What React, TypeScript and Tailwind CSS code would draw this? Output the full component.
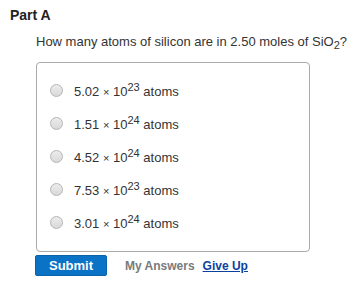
import React from "react";

const options: [string, string][] = [
  ["5.02", "23"],
  ["1.51", "24"],
  ["4.52", "24"],
  ["7.53", "23"],
  ["3.01", "24"],
];

export default function App() {
  return (
    <div className="w-[356px] h-[294px] bg-white text-[#333] font-['Liberation_Sans',Arial,sans-serif] overflow-hidden">
      <div className="pl-[10px] pt-[7px] text-[14px] leading-[16px] font-bold text-[#222]">Part A</div>
      <div className="pl-[36px] mt-[11px] text-[13px] leading-[16px]">
        How many atoms of silicon are in 2.50 moles of SiO<sub className="text-[11px]">2</sub>?
      </div>
      <div className="ml-[36px] mt-[12px] w-[274px] h-[190px] border border-[#aaaaaa] rounded-[4px] pt-[12px] pl-[13px]">
        {options.map(([m, e]) => (
          <div key={m} className="flex items-start h-[33px]">
            <span className="mt-[9px] w-[13px] h-[13px] rounded-full border border-[#b5b5b5] bg-gradient-to-b from-[#ececec] to-[#d9d9d9] shrink-0" />
            <span className="ml-[11px] text-[13px] leading-[33px] text-[#333]">
              {m} <span className="text-[11px]">×</span> 10<sup className="text-[11px]">{e}</sup> atoms
            </span>
          </div>
        ))}
      </div>
      <div className="flex items-center mt-[3px] pl-[35px]">
        <button className="w-[72px] h-[21px] rounded-[2px] bg-[#0b73c6] border border-[#0a62a9] text-white text-[13px] leading-[19px] font-bold">
          Submit
        </button>
        <span className="ml-[18px] text-[12px] font-bold text-[#7a7a7a]">My Answers</span>
        <span className="ml-[8px] text-[12px] font-bold text-[#0d3f9e] underline">Give Up</span>
      </div>
    </div>
  );
}
